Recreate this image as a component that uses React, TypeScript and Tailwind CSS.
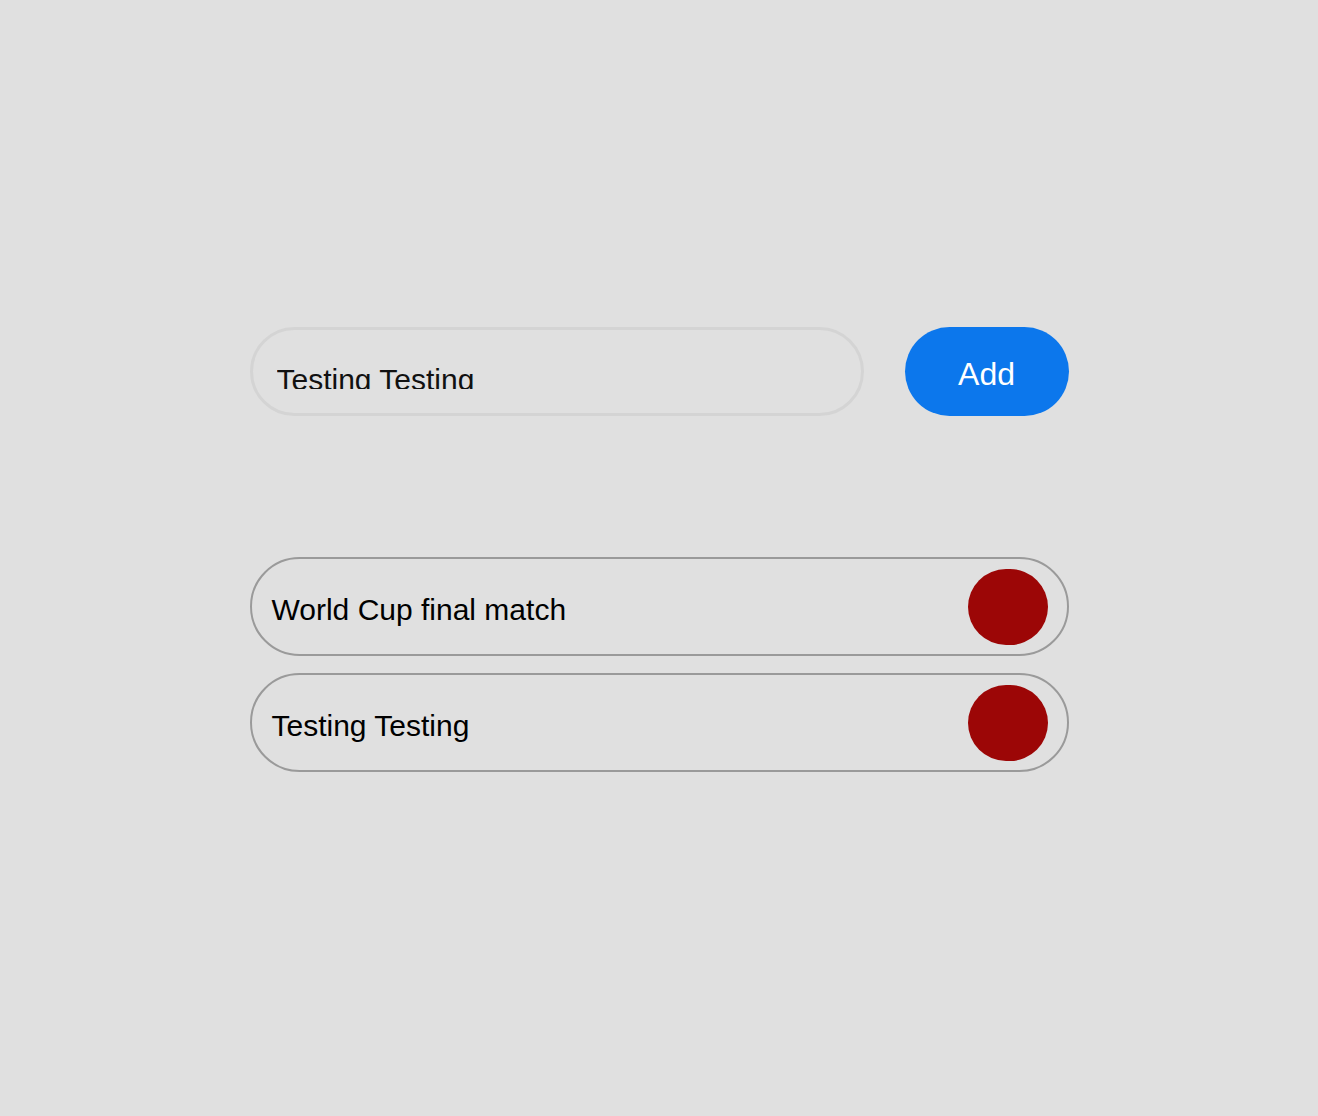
const items = ['World Cup final match', 'Testing Testing'];

export default function App() {
  return (
    <div className="min-h-screen bg-[#e0e0e0] font-['Liberation_Sans',Arial,sans-serif]">
      <div className="mx-auto w-[819px] pt-[327px]">
        {/* Entry row */}
        <div className="flex gap-[41px]">
          <div className="h-[89px] w-[614px] rounded-full border-[3px] border-[#d4d4d4] pl-[24px] pt-[35px]">
            <div className="h-[24px] overflow-hidden text-[30px] leading-[30px] text-[#111]">Testing Testing</div>
          </div>
          <button className="h-[89px] w-[164px] rounded-full bg-[#0c77ec] pt-[5px] text-[32px] text-white">Add</button>
        </div>

        {/* Todo list */}
        <div className="mt-[141px] flex flex-col gap-[17px]">
          {items.map((item, index) => (
            <div
              key={index}
              className="flex h-[99px] items-center justify-between rounded-full border-2 border-[#9a9a9a] pl-[20px] pr-[19px]"
            >
              <span className="pt-[6px] text-[30px] text-black">{item}</span>
              <div className="h-[76px] w-[80px] rounded-full bg-[#9c0606]" />
            </div>
          ))}
        </div>
      </div>
    </div>
  );
}
